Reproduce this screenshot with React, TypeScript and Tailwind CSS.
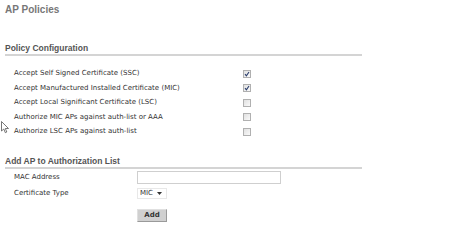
import React from "react";

const Check = ({ checked }: { checked: boolean }) => (
  <span className="flex h-[8px] w-[8px] items-center justify-center border border-[#b0b0b0] bg-gradient-to-br from-[#e0e0e0] to-[#fafafa]">
    {checked && (
      <svg width="6" height="6" viewBox="0 0 6 6">
        <path d="M1 3.2 L2.4 4.8 L5 1" stroke="#2a3d6b" strokeWidth="1.1" fill="none" />
      </svg>
    )}
  </span>
);

const rows: [string, boolean][] = [
  ["Accept Self Signed Certificate (SSC)", true],
  ["Accept Manufactured Installed Certificate (MIC)", true],
  ["Accept Local Significant Certificate (LSC)", false],
  ["Authorize MIC APs against auth-list or AAA", false],
  ["Authorize LSC APs against auth-list", false],
];

export default function App() {
  const label = "font-['DejaVu_Sans',sans-serif] text-[7px] text-[#333]";
  const heading =
    "font-['Liberation_Sans',Arial,sans-serif] font-bold text-[8.5px] text-[#555] leading-[10px]";
  return (
    <div className="relative h-[226px] w-[474px] overflow-hidden bg-white">
      <div className="flex flex-col pl-[5px] pt-[4px]">
        <div className="font-['Liberation_Sans',Arial,sans-serif] font-bold text-[10px] leading-[12px] text-[#777]">
          AP Policies
        </div>
        <div className="mt-[27px] w-[357px] border-b-2 border-[#d4d4d4] pb-[1px]">
          <div className={heading}>Policy Configuration</div>
        </div>
        <div className="mt-[13px] flex flex-col gap-[5.5px] pl-[9px]">
          {rows.map(([t, c]) => (
            <div key={t} className="flex h-[9px] items-center">
              <span className={`w-[229px] ${label}`}>{t}</span>
              <Check checked={c} />
            </div>
          ))}
        </div>
        <div className="mt-[20px] w-[357px] border-b-2 border-[#d4d4d4] pb-[1px]">
          <div className={heading}>Add AP to Authorization List</div>
        </div>
        <div className="mt-[1px] flex flex-col pl-[9px]">
          <div className="flex h-[14px] items-center">
            <span className={`w-[123px] ${label}`}>MAC Address</span>
            <span className="h-[13px] w-[144px] border border-[#cfcfcf] bg-white" />
          </div>
          <div className="mt-[3px] flex h-[12px] items-center">
            <span className={`w-[123px] ${label}`}>Certificate Type</span>
            <span className="flex h-[11px] w-[30px] items-center justify-between border border-[#e8e8e8] bg-white pl-[2px] pr-[4px]">
              <span className={label}>MIC</span>
              <svg width="5" height="3" viewBox="0 0 5 3">
                <path d="M0 0 H5 L2.5 3 Z" fill="#333" />
              </svg>
            </span>
          </div>
          <div className="mt-[10px] flex">
            <span className="ml-[123px] flex h-[13px] w-[30px] items-center justify-center border border-[#9a9a9a] border-l-[#e0e0e0] border-t-[#e0e0e0] bg-[#d0d0d0] font-['DejaVu_Sans',sans-serif] text-[7px] font-bold text-[#333]">
              Add
            </span>
          </div>
        </div>
      </div>
      <svg className="absolute left-[1px] top-[121px]" width="9" height="13" viewBox="0 0 9 13">
        <path d="M0.5 0.5 L0.5 10 L2.8 8 L4.3 11.7 L5.8 11 L4.3 7.5 L7.5 7.5 Z" fill="#fff" stroke="#555" strokeWidth="0.8" />
      </svg>
    </div>
  );
}
